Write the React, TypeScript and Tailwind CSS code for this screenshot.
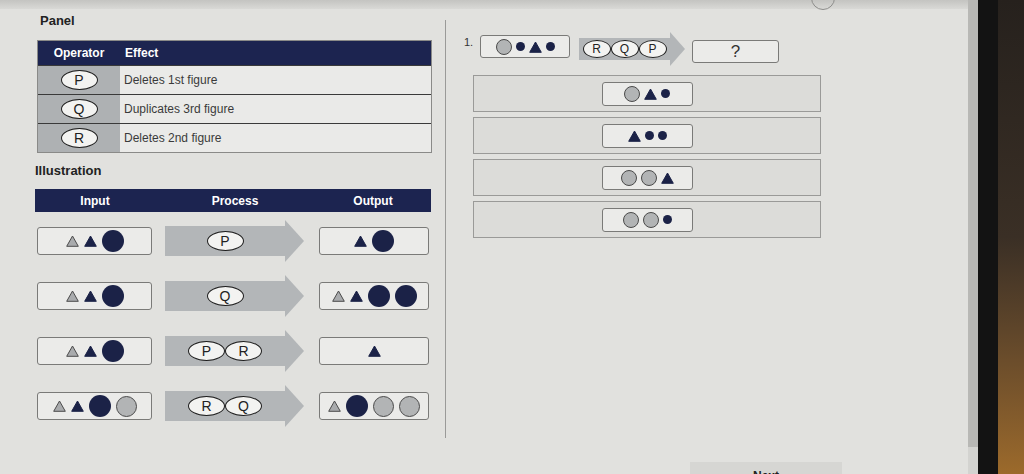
import type { ReactNode } from 'react';

const NAVY = '#1b2247';

type Shape = 't' | 'T' | 'C' | 'G' | 'd' | 'g';

// t: pale triangle, T: navy triangle, C: big navy circle, G: big grey circle,
// g: small grey circle (question), d: small navy dot
function Fig({ kind }: { kind: Shape }) {
  if (kind === 't' || kind === 'T') {
    const dark = kind === 'T';
    return (
      <svg width="13" height="12" viewBox="0 0 13 12" className="shrink-0">
        <polygon
          points="6.5,1 12.3,11.3 0.7,11.3"
          fill={dark ? NAVY : '#a9abad'}
          stroke={dark ? NAVY : '#4b4b4b'}
          strokeWidth="1"
          strokeLinejoin="round"
        />
      </svg>
    );
  }
  if (kind === 'C') return <span className="size-[22px] shrink-0 rounded-full bg-[#1b2247]" />;
  if (kind === 'G')
    return <span className="size-[21px] shrink-0 rounded-full border border-[#4a4a4a] bg-[#b2b4b5]" />;
  if (kind === 'g')
    return <span className="size-[16px] shrink-0 rounded-full border border-[#4a4a4a] bg-[#b2b4b5]" />;
  return <span className="size-[9px] shrink-0 rounded-full bg-[#1b2247]" />;
}

function Figures({ items, gap = 'gap-[5px]' }: { items: Shape[]; gap?: string }) {
  return (
    <div className={`flex items-center ${gap}`}>
      {items.map((k, i) => (
        <Fig key={i} kind={k} />
      ))}
    </div>
  );
}

function Oval({ letter, size = 'lg' }: { letter: string; size?: 'lg' | 'sm' }) {
  return (
    <span
      className={
        size === 'lg'
          ? 'flex h-[20px] w-[37px] items-center justify-center rounded-[50%] border-[1.5px] border-[#1e1e1e] bg-[#f3f3f1] text-[14px] leading-none text-[#222]'
          : 'flex h-[18px] w-[28px] items-center justify-center rounded-[50%] border-[1.5px] border-[#1e1e1e] bg-[#f3f3f1] text-[12px] leading-none text-[#222]'
      }
    >
      {letter}
    </span>
  );
}

function Arrow({
  bodyClass,
  headW,
  headH,
  children,
}: {
  bodyClass: string;
  headW: number;
  headH: number;
  children: ReactNode;
}) {
  return (
    <div className="flex items-center">
      <div className={`flex items-center justify-center bg-[#b3b6b8] ${bodyClass}`}>{children}</div>
      <svg width={headW} height={headH} viewBox={`0 0 ${headW} ${headH}`} className="shrink-0">
        <polygon points={`0,0 ${headW},${headH / 2} 0,${headH}`} fill="#b3b6b8" />
      </svg>
    </div>
  );
}

const panelRows = [
  { op: 'P', effect: 'Deletes 1st figure' },
  { op: 'Q', effect: 'Duplicates 3rd figure' },
  { op: 'R', effect: 'Deletes 2nd figure' },
];

const examples: { input: Shape[]; ops: string[]; output: Shape[] }[] = [
  { input: ['t', 'T', 'C'], ops: ['P'], output: ['T', 'C'] },
  { input: ['t', 'T', 'C'], ops: ['Q'], output: ['t', 'T', 'C', 'C'] },
  { input: ['t', 'T', 'C'], ops: ['P', 'R'], output: ['T'] },
  { input: ['t', 'T', 'C', 'G'], ops: ['R', 'Q'], output: ['t', 'C', 'G', 'G'] },
];

const options: Shape[][] = [
  ['g', 'T', 'd'],
  ['T', 'd', 'd'],
  ['g', 'g', 'T'],
  ['g', 'g', 'd'],
];

function Box({ className, children }: { className: string; children: ReactNode }) {
  return (
    <div
      className={`flex items-center justify-center rounded-[3px] border border-[#7a7a78] bg-[#ebebe9] ${className}`}
    >
      {children}
    </div>
  );
}

export default function App() {
  return (
    <div className="flex h-[474px] w-[1024px] overflow-hidden bg-[#2a2420] font-['Liberation_Sans',Arial,sans-serif] text-[#222]">
      <main className="relative flex w-[968px] flex-col bg-[#e1e1de]">
        {/* browser top edge */}
        <div className="h-[9px] bg-linear-to-b from-[#c4c4c1] to-[#d9d9d6]" />
        <span className="absolute left-[811px] top-[-14px] size-[24px] rounded-full border border-[#8d8d8b]" />

        <div className="flex flex-1">
          {/* left: panel + illustration */}
          <section className="w-[445px] shrink-0 pl-[35px] pt-[4px]">
            <h2 className="pl-[5px] text-[13px] font-bold leading-4">Panel</h2>

            <div className="ml-[2px] mt-[11px] w-[395px] border border-[#8a8a88]">
              <div className="flex h-[24px] items-center bg-[#1c2450] text-[12px] font-bold text-white">
                <span className="w-[82px] text-center">Operator</span>
                <span className="pl-[5px]">Effect</span>
              </div>
              {panelRows.map((r) => (
                <div key={r.op} className="flex h-[29px] border-t border-[#3a3a3a]">
                  <div className="flex w-[82px] items-center justify-center bg-[#aeb1b3]">
                    <Oval letter={r.op} />
                  </div>
                  <div className="flex flex-1 items-center bg-[#eaeae8] pl-[4px] text-[12px] text-[#3a3a3a]">
                    {r.effect}
                  </div>
                </div>
              ))}
            </div>

            <h2 className="mt-[10px] text-[13px] font-bold leading-4">Illustration</h2>

            <div className="mt-[10px] flex h-[23px] w-[396px] items-center bg-[#1c2450] text-[12px] font-bold text-white">
              <span className="w-[120px] text-center">Input</span>
              <span className="w-[160px] text-center">Process</span>
              <span className="w-[116px] text-center">Output</span>
            </div>

            <div className="mt-[8px] flex flex-col gap-[13px]">
              {examples.map((ex, i) => (
                <div key={i} className="flex items-center">
                  <Box className="ml-[2px] h-[28px] w-[115px]">
                    <Figures items={ex.input} />
                  </Box>
                  <div className="ml-[13px]">
                    <Arrow bodyClass="h-[30px] w-[120px]" headW={19} headH={42}>
                      {ex.ops.map((o) => (
                        <Oval key={o} letter={o} />
                      ))}
                    </Arrow>
                  </div>
                  <Box className="ml-[15px] h-[28px] w-[110px]">
                    <Figures items={ex.output} />
                  </Box>
                </div>
              ))}
            </div>
          </section>

          <div className="mt-[11px] h-[418px] w-px shrink-0 bg-[#9a9a98]" />

          {/* right: question */}
          <section className="pl-[18px] pt-[23px]">
            <div className="flex items-start">
              <span className="mt-[3px] w-[16px] text-[11px] leading-[14px] text-[#333]">1.</span>
              <Box className="mt-[3px] h-[23px] w-[90px]">
                <Figures items={['g', 'd', 'T', 'd']} gap="gap-[4px]" />
              </Box>
              <div className="ml-[9px]">
                <Arrow bodyClass="h-[22px] w-[91px]" headW={15} headH={34}>
                  <Oval letter="R" size="sm" />
                  <Oval letter="Q" size="sm" />
                  <Oval letter="P" size="sm" />
                </Arrow>
              </div>
              <Box className="ml-[7px] mt-[8px] h-[23px] w-[87px]">
                <span className="text-[17px] leading-none text-[#333]">?</span>
              </Box>
            </div>

            <div className="ml-[9px] mt-[9px] flex w-[348px] flex-col gap-[5px]">
              {options.map((opt, i) => (
                <div
                  key={i}
                  className="flex h-[37px] items-center justify-center border border-[#9a9a98] bg-[#dcdcd9]"
                >
                  <Box className="h-[24px] w-[91px]">
                    <Figures items={opt} gap="gap-[4px]" />
                  </Box>
                </div>
              ))}
            </div>
          </section>
        </div>

        {/* footer: Next button, cut off at the bottom edge */}
        <div className="h-[12px] overflow-hidden">
          <div className="ml-[690px] flex h-[24px] w-[152px] justify-center bg-[#d6d6d3] pt-[5px] text-[12px] font-bold text-[#222]">
            Next
          </div>
        </div>
      </main>

      {/* scrollbar */}
      <div className="flex w-[10px] flex-col bg-[#d3d3d0]">
        <div className="h-[447px] bg-[#b8b8b5]" />
      </div>
      {/* monitor bezel */}
      <div className="w-[20px] bg-[#131313]" />
      <div className="flex-1 bg-linear-to-b from-[#26211d] via-[#3a2f25] to-[#9c6a2b]" />
    </div>
  );
}
